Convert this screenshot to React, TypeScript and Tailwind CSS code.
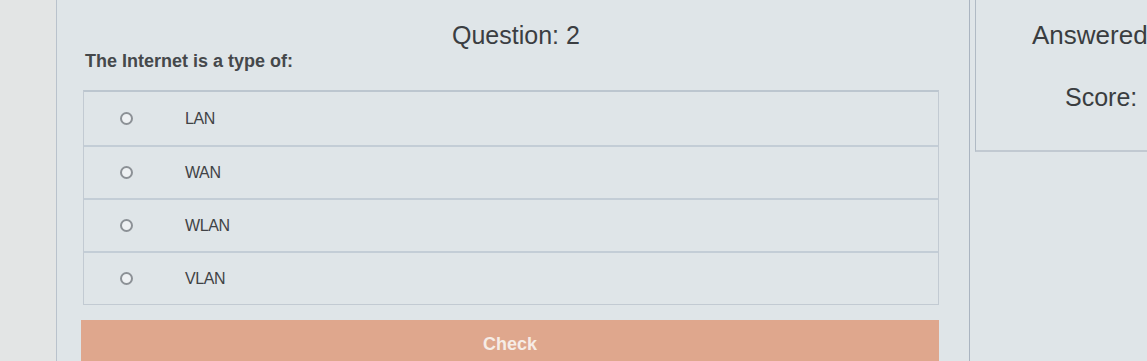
import React from 'react';

const options = ['LAN', 'WAN', 'WLAN', 'VLAN'];

const App: React.FC = () => {
    return (
        <div className="w-[1147px] h-[361px] overflow-hidden flex bg-[#dfe5e8] text-[#3a3d40]" style={{ fontFamily: '"Liberation Sans", Arial, sans-serif' }}>
            {/* Left gutter */}
            <div className="w-[57px] shrink-0 bg-[#e3e5e5] border-r border-[#b9c2cc]" />

            {/* Main question area */}
            <div className="w-[913px] shrink-0 border-r border-[#aab4c0] flex flex-col">
                <div className="pl-[395px] pt-[21px] text-[25px] leading-[28px] text-[#3b3e42]">Question: 2</div>
                <div className="pl-[28px] mt-[2px] text-[18px] font-bold leading-[20px] text-[#45484b]">The Internet is a type of:</div>
                <div className="ml-[26px] mr-[30px] mt-[19px] border border-[#c2cad2] border-t-2 border-t-[#bcc6cf]">
                    {options.map((opt, i) => (
                        <div
                            key={opt}
                            className={`h-[53px] flex items-center ${i > 0 ? 'border-t-2 border-[#c3cdd6]' : ''}`}
                        >
                            <span className="ml-[36px] w-[13px] h-[13px] rounded-full border-2 border-[#8c9196] bg-[#eef1f3]" />
                            <span className="ml-[52px] text-[16px] tracking-tight text-[#3f4245]">{opt}</span>
                        </div>
                    ))}
                </div>
                <div className="ml-[24px] mr-[30px] mt-[15px] flex-1 bg-[#dfa78d] flex justify-center pt-[11px]">
                    <span className="text-[18px] font-bold text-[#f6ece6]">Check</span>
                </div>
            </div>

            {/* Right status panel */}
            <div className="flex-1 pl-[5px]">
                <div className="h-[152px] border-l border-b-2 border-[#b0bac4] border-b-[#c1c9d1] flex flex-col">
                    <div className="pl-[56px] pt-[21px] text-[26px] leading-[28px] whitespace-nowrap text-[#3a3d40]">Answered</div>
                    <div className="pl-[89px] mt-[34px] text-[25px] leading-[28px] text-[#3a3d40]">Score:</div>
                </div>
            </div>
        </div>
    );
};

export default App;
